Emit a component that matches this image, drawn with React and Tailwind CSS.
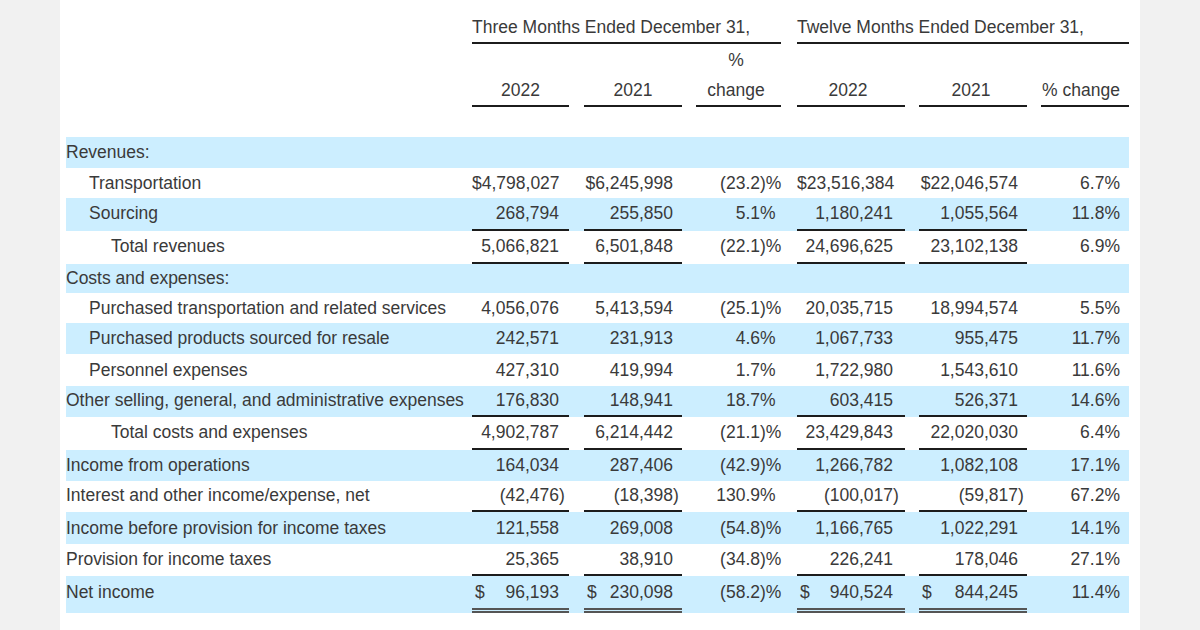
import React from 'react'

const COLS = [
  { w: 'w-[97px]', pad: '', slot: 'w-[10px]' },
  { w: 'w-[113px]', pad: 'pl-[15px]', slot: 'w-[9px]' },
  { w: 'w-[99px]', pad: 'pl-[14px]', slot: 'w-[21px]' },
  { w: 'w-[124px]', pad: 'pl-[16px]', slot: 'w-[12px]' },
  { w: 'w-[122px]', pad: 'pl-[14px]', slot: 'w-[9px]' },
  { w: 'w-[102px]', pad: 'pl-[14px]', slot: 'w-[9px]' },
]

const rows = [
  { label: 'Revenues:', indent: 0, h: 'h-[31px]', vals: ['', '', '', '', '', ''] },
  { label: 'Transportation', indent: 1, h: 'h-[30px]', vals: ['$4,798,027', '$6,245,998', '(23.2)%', '$23,516,384', '$22,046,574', '6.7%'] },
  { label: 'Sourcing', indent: 1, h: 'h-[33px]', line: 'single', vals: ['268,794', '255,850', '5.1%', '1,180,241', '1,055,564', '11.8%'] },
  { label: 'Total revenues', indent: 2, h: 'h-[33px]', line: 'single', vals: ['5,066,821', '6,501,848', '(22.1)%', '24,696,625', '23,102,138', '6.9%'] },
  { label: 'Costs and expenses:', indent: 0, h: 'h-[29px]', vals: ['', '', '', '', '', ''] },
  { label: 'Purchased transportation and related services', indent: 1, h: 'h-[30px]', vals: ['4,056,076', '5,413,594', '(25.1)%', '20,035,715', '18,994,574', '5.5%'] },
  { label: 'Purchased products sourced for resale', indent: 1, h: 'h-[31px]', vals: ['242,571', '231,913', '4.6%', '1,067,733', '955,475', '11.7%'] },
  { label: 'Personnel expenses', indent: 1, h: 'h-[32px]', vals: ['427,310', '419,994', '1.7%', '1,722,980', '1,543,610', '11.6%'] },
  { label: 'Other selling, general, and administrative expenses', indent: 0, h: 'h-[31px]', line: 'single', vals: ['176,830', '148,941', '18.7%', '603,415', '526,371', '14.6%'] },
  { label: 'Total costs and expenses', indent: 2, h: 'h-[33px]', line: 'single', vals: ['4,902,787', '6,214,442', '(21.1)%', '23,429,843', '22,020,030', '6.4%'] },
  { label: 'Income from operations', indent: 0, h: 'h-[31px]', vals: ['164,034', '287,406', '(42.9)%', '1,266,782', '1,082,108', '17.1%'] },
  { label: 'Interest and other income/expense, net', indent: 0, h: 'h-[31px]', line: 'single', vals: ['(42,476)', '(18,398)', '130.9%', '(100,017)', '(59,817)', '67.2%'] },
  { label: 'Income before provision for income taxes', indent: 0, h: 'h-[32px]', vals: ['121,558', '269,008', '(54.8)%', '1,166,765', '1,022,291', '14.1%'] },
  { label: 'Provision for income taxes', indent: 0, h: 'h-[32px]', line: 'single', vals: ['25,365', '38,910', '(34.8)%', '226,241', '178,046', '27.1%'] },
  { label: 'Net income', indent: 0, h: 'h-[37px]', line: 'double', vals: ['$ 96,193', '$ 230,098', '(58.2)%', '$ 940,524', '$ 844,245', '11.4%'] },
]

function splitVal(v, i) {
  if (v.endsWith(')%')) return [v.slice(0, -2), ')%']
  if (v.endsWith(')')) return [v.slice(0, -1), ')']
  if (i === 2 && v.endsWith('%')) return [v.slice(0, -1), '%']
  return [v, '']
}

function lineClass(line, i) {
  // no rules under the % change columns
  if (i === 2 || i === 5) return line === 'double' ? 'border-b-[5px] border-transparent' : line ? 'border-b-2 border-transparent' : ''
  if (line === 'double') return 'border-b-[5px] border-double border-[#555]'
  if (line === 'single') return 'border-b-2 border-[#1c1c1c]'
  return ''
}

function Cell({ v, i, line }) {
  const col = COLS[i]
  const dollar = v.startsWith('$ ')
  const [num, tail] = splitVal(dollar ? v.slice(2) : v, i)
  return (
    <div className={`${col.w} ${col.pad} h-full shrink-0`}>
      <div className={`h-full flex items-center ${lineClass(line, i)}`}>
        {dollar && <span className="pl-[3px]">$</span>}
        <span className="ml-auto">{num}</span>
        <span className={`${col.slot} shrink-0 text-left`}>{tail}</span>
      </div>
    </div>
  )
}

export default function App() {
  const indent = ['pl-0', 'pl-[23px]', 'pl-[45px]']
  return (
    <div className="w-[1200px] h-[630px] bg-[#f1f1f1] flex font-['Liberation_Sans',Arial,sans-serif] text-[17.5px] text-[#3a3a3a] overflow-hidden">
      <div className="ml-[60px] w-[1080px] h-full bg-white px-[6px]">
        {/* header */}
        <div className="flex h-[44px] leading-[30px]">
          <div className="w-[406px] shrink-0" />
          <div className="w-[309px] shrink-0 pt-[12px] border-b-2 border-[#1c1c1c] whitespace-nowrap">Three Months Ended December 31,</div>
          <div className="pl-[16px] shrink-0">
            <div className="w-[332px] pt-[12px] border-b-2 border-[#1c1c1c] whitespace-nowrap">Twelve Months Ended December 31,</div>
          </div>
        </div>
        <div className="flex items-end h-[63px] leading-[30px] text-center">
          <div className="w-[406px] shrink-0" />
          <div className="w-[97px] shrink-0"><div className="border-b-2 border-[#1c1c1c]">2022</div></div>
          <div className="w-[113px] pl-[15px] shrink-0"><div className="border-b-2 border-[#1c1c1c]">2021</div></div>
          <div className="w-[99px] pl-[14px] shrink-0"><div className="border-b-2 border-[#1c1c1c] pr-[5px]">%<br />change</div></div>
          <div className="w-[124px] pl-[16px] shrink-0"><div className="border-b-2 border-[#1c1c1c] pr-[6px]">2022</div></div>
          <div className="w-[122px] pl-[14px] shrink-0"><div className="border-b-2 border-[#1c1c1c] pr-[4px]">2021</div></div>
          <div className="w-[102px] pl-[14px] shrink-0"><div className="border-b-2 border-[#1c1c1c] pr-[8px] whitespace-nowrap">% change</div></div>
        </div>

        {/* body */}
        <div className="mt-[30px] w-[1063px]">
          {rows.map((r, ri) => (
            <div key={r.label} className={`flex ${r.h} ${ri % 2 === 0 ? 'bg-[#cceeff]' : 'bg-white'}`}>
              <div className={`w-[406px] shrink-0 h-full whitespace-nowrap ${indent[r.indent]}`}>
                <div className={`h-full flex items-center ${lineClass(r.line, 2)}`}>{r.label}</div>
              </div>
              {r.vals.map((v, i) => (
                <Cell key={i} v={v} i={i} line={r.line} />
              ))}
            </div>
          ))}
        </div>
      </div>
    </div>
  )
}
